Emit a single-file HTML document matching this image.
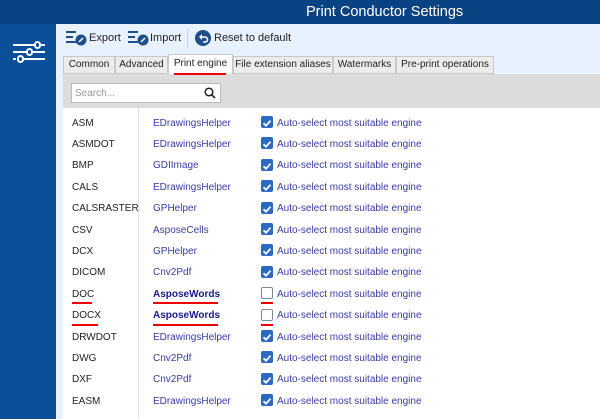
<!DOCTYPE html>
<html><head><meta charset="utf-8"><style>
*{margin:0;padding:0;box-sizing:border-box}
body{width:600px;height:419px;overflow:hidden;background:#fff;font-family:"Liberation Sans",sans-serif;position:relative}
.title{position:absolute;left:0;top:0;width:600px;height:24px;background:#0a4383;color:#fff;font-size:14.5px;line-height:24px;padding-left:306px;z-index:5}
.side{position:absolute;left:0;top:24px;width:56px;height:395px;background:#0b4f98}
.strip{position:absolute;left:56px;top:24px;width:544px;height:395px;background:#e8f2fe}
.tb{position:absolute;top:24px;height:28px;font-size:11px;color:#222;line-height:28px}
.tab{position:absolute;top:56px;height:18px;border:1px solid #c8c8c8;background:#ececec;line-height:16px;text-align:center;color:#222;font-size:10px;white-space:nowrap}
.panel{position:absolute;left:63px;top:74px;width:537px;height:34px;background:#dcdcdc}
.search{position:absolute;left:71px;top:83px;width:150px;height:20px;background:#fff;border:1px solid #bbb;font-size:10px;color:#999;padding:3px 3px;line-height:13px}
.list{position:absolute;left:63px;top:108px;width:537px;height:311px;background:#fff}
.div{position:absolute;left:138px;top:108px;width:1px;height:311px;background:#e2e2e2}
.r{position:absolute;font-size:10px;line-height:14px;white-space:nowrap}
.c1{left:72px;color:#222}
.c2{left:153px;color:#3a3aa8}
.cb{position:absolute;left:261px;width:12px;height:12px;border-radius:2px;background:#2b6ac0}
.cb.off{background:#fff;border:1px solid #7a8aa0}
.c3{left:277px;color:#3a3aa8}
.ul{position:absolute;height:2px;background:#e00}
</style></head><body>
<div class="title">Print Conductor Settings</div>
<div class="side">
<svg width="56" height="60" viewBox="0 0 56 60" style="position:absolute;left:0;top:0">
<g stroke="#fff" stroke-width="2" fill="none">
<line x1="13" y1="21" x2="35" y2="21"/><line x1="41" y1="21" x2="45" y2="21"/><rect x="35" y="18" width="5" height="6" rx="2.5"/>
<line x1="13" y1="28" x2="27" y2="28"/><line x1="33" y1="28" x2="45" y2="28"/><rect x="27" y="25" width="5" height="6" rx="2.5"/>
<line x1="13" y1="35" x2="16" y2="35"/><line x1="24" y1="35" x2="45" y2="35"/><rect x="18" y="32" width="5" height="6" rx="2.5"/>
</g></svg></div>
<div class="strip"></div>
<svg width="24" height="18" style="position:absolute;left:66px;top:29px"><g fill="#1f4e8c"><rect x="0" y="2" width="10" height="2"/><rect x="0" y="7" width="7" height="2"/><rect x="0" y="12" width="10" height="2"/><circle cx="15" cy="11" r="5.5"/></g><path d="M13 13l4-4" stroke="#fff" stroke-width="1.5"/></svg>
<div class="tb" style="left:89px">Export</div>
<svg width="24" height="18" style="position:absolute;left:128px;top:29px"><g fill="#1f4e8c"><rect x="0" y="2" width="10" height="2"/><rect x="0" y="7" width="7" height="2"/><rect x="0" y="12" width="10" height="2"/><circle cx="15" cy="11" r="5.5"/></g><path d="M13 13l4-4" stroke="#fff" stroke-width="1.5"/></svg>
<div class="tb" style="left:150px">Import</div>
<div style="position:absolute;left:187px;top:28px;width:1px;height:20px;background:#c8d4e4"></div>
<svg width="16" height="16" style="position:absolute;left:195px;top:30px"><circle cx="8" cy="8" r="8" fill="#1f4e8c"/><path d="M5 7h5a2.5 2.5 0 0 1 0 5H8" stroke="#fff" stroke-width="1.6" fill="none"/><path d="M7 4L4 7l3 3z" fill="#fff"/></svg>
<div class="tb" style="left:214px">Reset to default</div>
<div class="tab" style="left:63px;width:52px">Common</div>
<div class="tab" style="left:115px;width:53px">Advanced</div>
<div class="tab" style="left:168px;top:54px;height:20px;width:65px;background:#fff;border-bottom:none;line-height:18px;z-index:2">Print engine</div>
<div class="ul" style="left:174px;top:73px;width:52px;z-index:3"></div>
<div class="tab" style="left:233px;width:100px">File extension aliases</div>
<div class="tab" style="left:333px;width:63px">Watermarks</div>
<div class="tab" style="left:396px;width:98px">Pre-print operations</div>
<div class="panel"></div>
<div class="search">Search...<svg width="12" height="12" style="position:absolute;right:4px;top:3px"><circle cx="5" cy="5" r="3.8" stroke="#222" stroke-width="1.5" fill="none"/><path d="M8 8l3 3" stroke="#222" stroke-width="1.6"/></svg></div>
<div class="list"></div>
<div class="div"></div>
<div id="rows"></div>
<script>
var d=[["ASM","EDrawingsHelper"],["ASMDOT","EDrawingsHelper"],["BMP","GDIImage"],["CALS","EDrawingsHelper"],["CALSRASTER","GPHelper"],["CSV","AsposeCells"],["DCX","GPHelper"],["DICOM","Cnv2Pdf"],["DOC","AsposeWords",1],["DOCX","AsposeWords",1],["DRWDOT","EDrawingsHelper"],["DWG","Cnv2Pdf"],["DXF","Cnv2Pdf"],["EASM","EDrawingsHelper"]];
var h="";d.forEach(function(r,i){var y=115+i*21.4;
h+='<div class="r c1" style="top:'+(y+1.5)+'px">'+r[0]+'</div>';
h+='<div class="r c2" style="top:'+(y+1.5)+'px;'+(r[2]?'font-weight:bold;color:#1a1a8c':'')+'">'+r[1]+'</div>';
h+='<div class="cb'+(r[2]?' off':'')+'" style="top:'+(y+1)+'px">'+(r[2]?'':'<svg width="12" height="12"><path d="M2.5 6.2l2.5 2.5 4.5-5" stroke="#fff" stroke-width="1.8" fill="none"/></svg>')+'</div>';
h+='<div class="r c3" style="top:'+(y+1.5)+'px">Auto-select most suitable engine</div>';
if(r[2]){h+='<div class="ul" style="left:72px;top:'+(y+16)+'px;width:'+(r[0]=="DOC"?20:26)+'px"></div><div class="ul" style="left:153px;top:'+(y+16)+'px;width:65px"></div><div class="ul" style="left:261px;top:'+(y+16)+'px;width:12px"></div>';}
});document.getElementById("rows").innerHTML=h;
</script>
</body></html>
